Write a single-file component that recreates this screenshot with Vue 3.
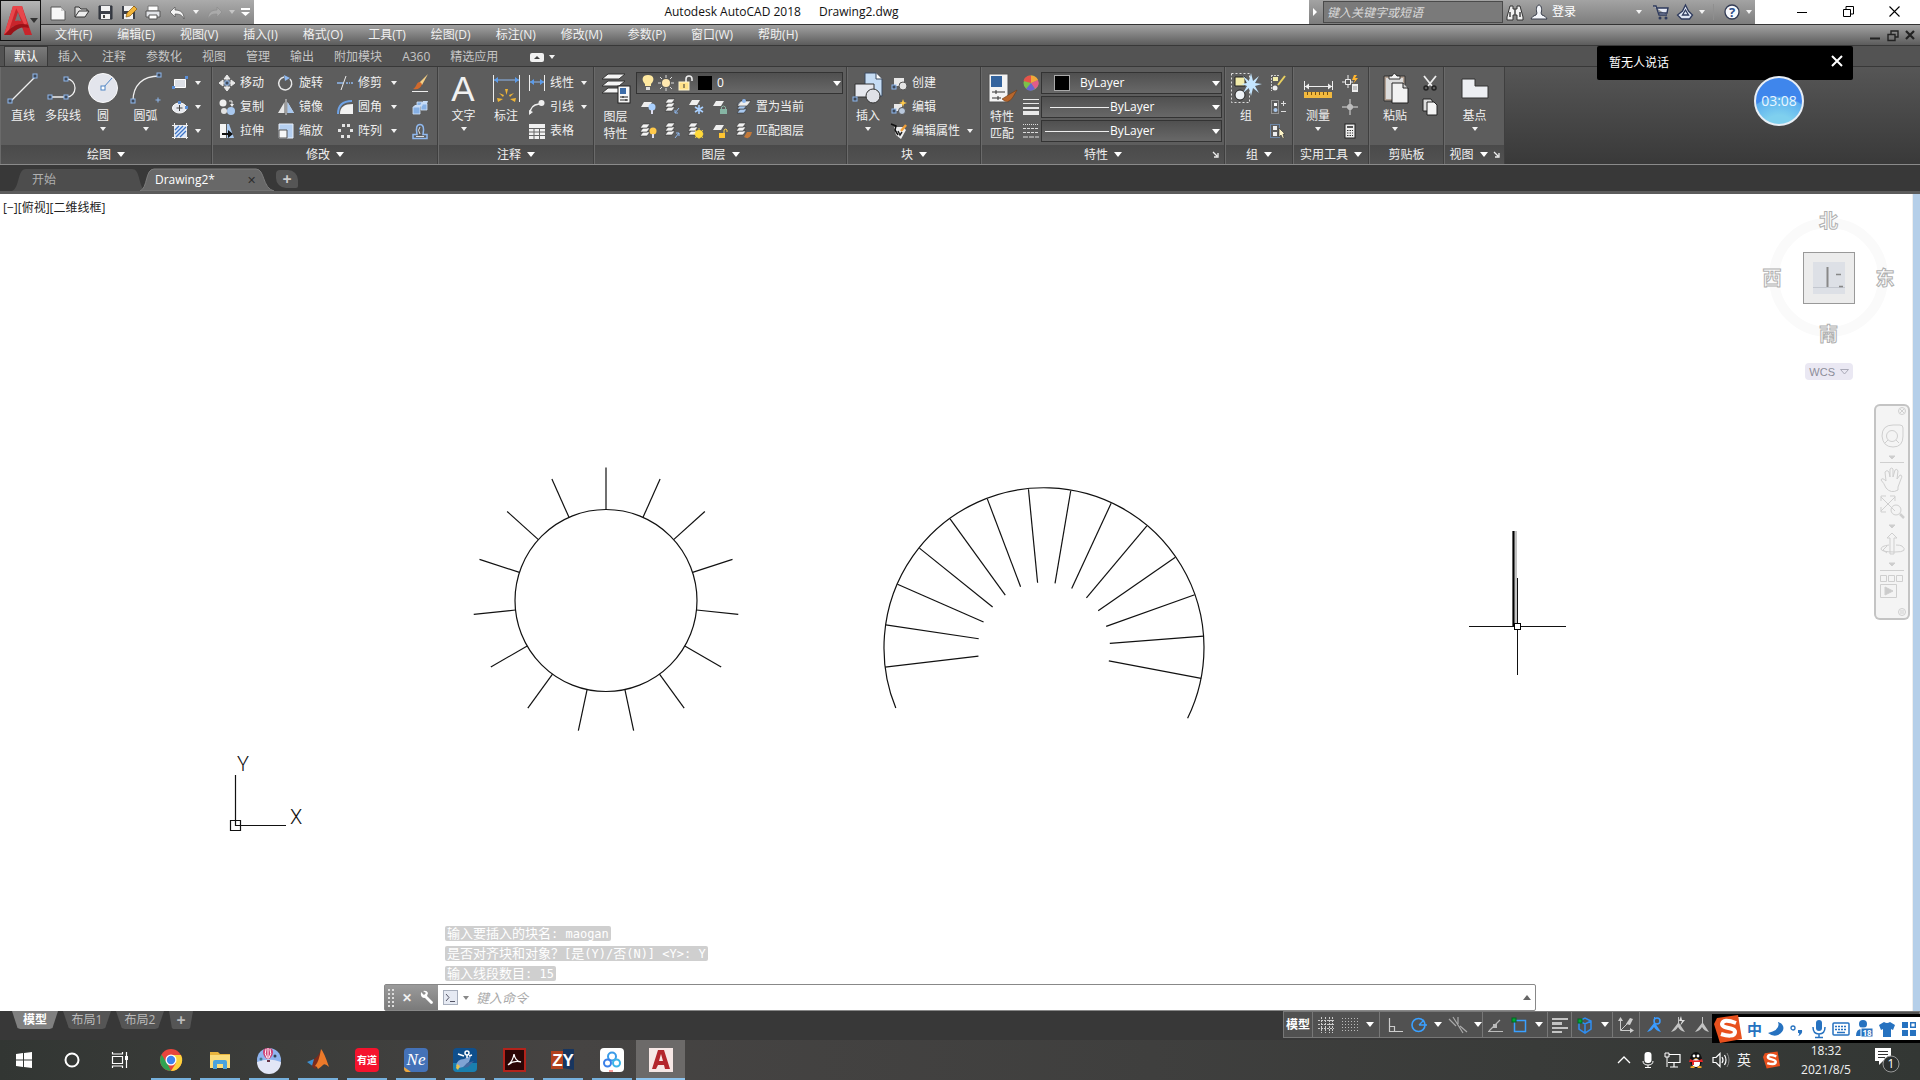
<script setup>
import { h, ref } from 'vue'

const B = '#8fb8ee'
const sq = (x, y) => `<rect x="${x}" y="${y}" width="4" height="4" fill="#3f4a5a" stroke="${B}"/>`
const sheets = (x, y, c = '#f4f4f4') => [8, 4, 0].map(d =>
  `<path d="M${x + 3} ${y + d}h7l-3 4h-7z" fill="${c}" stroke="#333" stroke-width=".6"/>`).join('')
const person = 'M8 1C5 1 5 7 6 9L5 11C2 12 1 13 0 15H16C15 13 14 12 11 11L10 9C11 7 11 1 8 1Z'
const compass = 'M9 1v6l-7 9q5-1 7-5q2 4 7 5l-6-9V1z'

// name: [width, height, markup]
const icons = {
  logo: [30, 32, '<path d="M10 1h9l10 29h-7l-3-8q-6-2-10 0l-2 8H1z" fill="#c9252c"/><path d="M10 1h4L6 25l-5 5zM19 1l5 17l-2 3L12 1z" fill="#e8474b"/><path d="M12 16l3-9l3 9q-3-1-6 0z" fill="#777"/><path d="M1 30l6-6q8-7 18-4l1 3q-10-3-18 7z" fill="#9c1218"/>'],
  new: [16, 15, '<path d="M1 2h10l4 4v9H1z" fill="#f7f7f7" stroke="#555"/><path d="M11 2v4h4z" fill="#ccc"/>'],
  open: [16, 14, '<path d="M1 12V2h4l2 2h6v3" fill="#ddd" stroke="#333"/><path d="M1 12l4-6h10l-4 6z" fill="#eee" stroke="#333"/>'],
  save: [15, 15, '<path d="M1 1h13v13H1z" fill="#3c4049" stroke="#2c3038"/><path d="M3 1h9v5H3zM3 9h9v5H3z" fill="#f2f2f2"/><path d="M5 10h2v3H5z" fill="#444"/>'],
  saveAs: [16, 15, '<path d="M1 1h13v13H1z" fill="#3c4049"/><path d="M3 1h9v5H3zM3 9h9v5H3z" fill="#f2f2f2"/><path d="M5 12l1-4 7-7 3 3-7 7z" fill="#f2b53a" stroke="#8a5b10" stroke-width=".7"/>'],
  print: [16, 15, '<path d="M3 1h10v5H3z" fill="#fff" stroke="#777"/><path d="M1 6h14v6H1z" fill="#e2e4e8" stroke="#555"/><path d="M4 10h8v4H4z" fill="#fff" stroke="#555"/>'],
  undo: [16, 13, '<path d="M6 1v3c6 0 9 3 9 9c-2-4-4-5-9-5v3L1 6z" fill="#f4f4f4" stroke="#555" stroke-width=".7"/>'],
  redo: [16, 13, '<path d="M10 1v3C4 4 1 7 1 13c2-4 4-5 9-5v3l5-5z" fill="#aaa" stroke="#8c8c8c" stroke-width=".7"/>'],
  more: [9, 9, '<path d="M0 0h9v2H0zM0 4h9L4.500 8z" fill="#fff"/>'],
  down: [6, 4, '<path d="M0 0h6L3 4z" fill="#f2f2f2"/>'],
  downL: [8, 5, '<path d="M0 0h8L4 5z" fill="#fff"/>'],
  downD: [8, 5, '<path d="M0 0h8L4 5z" fill="#333"/>'],
  expand: [6, 6, '<path d="M0 0l4 4M5 1v4H1" fill="none" stroke="#eee" stroke-width="1.300"/>'],
  right: [5, 8, '<path d="M0 0v8l4-4z" fill="#fff"/>'],
  binoc: [16, 17, '<path d="M3 2h3v3h4V2h3l3 11v3h-6v-5H6v5H0v-3z" fill="#f1f1f1" stroke="#333"/><path d="M8 5v6M3 8v5M13 8v5" stroke="#444" stroke-width="1.500"/>'],
  user: [16, 16, `<path d="${person}" fill="#f4f6fa" stroke="#3a3f4c"/>`],
  cart: [16, 16, '<path d="M0 2h3l3 9h8M4 4h11l-1 5H6" fill="#e7ebf5" stroke="#2e3a5c" stroke-width="1.400"/><circle cx="7" cy="14" r="1.500" fill="#2e3a5c"/><circle cx="13" cy="14" r="1.500" fill="#2e3a5c"/>'],
  a360: [17, 16, '<path d="M8.500 1l3 6 4 4-3 4h-8l-4-4 5-4z" fill="#dfe6f4" stroke="#2e3a5c" stroke-width="1.300"/><path d="M8.500 6l3 5h-6z" fill="none" stroke="#2e3a5c" stroke-width="1.300"/>'],
  help: [16, 16, '<circle cx="8" cy="8" r="7" fill="#f7f9fd" stroke="#333c55" stroke-width="1.300"/><text x="8" y="13" font-size="13" font-weight="700" text-anchor="middle" fill="#2e4f8c">?</text>'],
  wMin: [11, 11, '<path d="M0 6.500h10" stroke="#000"/>'],
  wMax: [11, 11, '<path d="M.5 3.500h7v7h-7zM3 3V.5h7.500V8H8" fill="none" stroke="#000"/>'],
  wClose: [11, 11, '<path d="M.5 .5l10 10M10.500 .5l-10 10" stroke="#000" stroke-width="1.100"/>'],
  dMin: [11, 11, '<path d="M0 8.500h10" stroke="#222" stroke-width="2"/>'],
  dMax: [12, 11, '<path d="M1 4.500h7v6H1zM4 4V1h7v6H8" fill="none" stroke="#222" stroke-width="1.400"/>'],
  dClose: [10, 10, '<path d="M1 1l8 8M9 1L1 9" stroke="#222" stroke-width="2.200"/>'],
  ribbonMin: [14, 9, '<rect width="14" height="9" rx="2" fill="#f1f1f1"/><path d="M4 6h6L7 3z" fill="#444"/>'],

  line: [32, 32, `<path d="M4 29L29 4" stroke="#f0f0f0" stroke-width="1.300"/>${sq(1, 27)}${sq(26, 2)}`],
  pline: [32, 32, `<path d="M3 25h17a8 9 0 0 0 0-18h-1" fill="none" stroke="#f0f0f0" stroke-width="1.300"/>${sq(1, 23)}${sq(17, 23)}${sq(17, 5)}`],
  circle: [32, 32, `<circle cx="16" cy="16" r="14.500" fill="#e3e5ec" stroke="#fafafa"/><path d="M16 16l9-10" stroke="#4d83c4"/><rect x="14" y="14" width="4" height="4" fill="#fff" stroke="#4d83c4"/>`],
  arc: [32, 32, `<path d="M3 29C3 13 13 4 29 4" fill="none" stroke="#f0f0f0" stroke-width="1.300"/>${sq(1, 27)}${sq(27, 1)}<path d="M25.500 28h5M28 25.500v5" stroke="${B}"/>`],
  rect: [16, 16, `<path d="M2.500 4.500h11v8h-11z" fill="#dcdfe6" stroke="#fff"/><path d="M0 11h3v3H0zM13 1h3v3h-3z" fill="#5a8ed6"/>`],
  ellipse: [16, 16, `<ellipse cx="7.500" cy="9" rx="7" ry="5" fill="#e6e8ee" stroke="#fff"/><path d="M7.500 6v6M4.500 9h6" stroke="#444"/><path d="M6 2h3v3H6zM13 7h3v3h-3z" fill="#5a8ed6"/>`],
  hatch: [16, 16, '<path d="M2.500 0v16M14.500 0v16M0 2.500h16M0 14.500h16" stroke="#eee"/><rect x="3" y="3" width="11" height="11" fill="#dfe9fa"/><path d="M3 7l4-4M3 11l8-8M4 14l10-10M8 14l6-6" stroke="#3f76c6" stroke-width="1.300"/>'],
  move: [16, 16, `<path d="M8 0l3 4H5zM8 16l3-4H5zM0 8l4-3v6zM16 8l-4-3v6zM8 3v3M8 10v3M3 8h3M10 8h3" fill="#e9e9e9" stroke="#e9e9e9" stroke-width="1"/>${sq(6, 6)}`],
  rotate: [16, 16, `<path d="M6 2A6.500 6.500 0 1 0 12 4" fill="none" stroke="#e9e9e9" stroke-width="1.500"/><path d="M6 0l6 3-5 3z" fill="${B}"/>`],
  trim: [16, 16, `<path d="M0 8h6M9 8h2M12 8h1M14 8h2" stroke="${B}" stroke-width="1.300"/><path d="M9 1L4 15" stroke="#eee"/>`],
  brush: [16, 18, '<path d="M0 17.500h16" stroke="#eee"/><path d="M16 0L7 9l3 2z" fill="#f5cf85"/><path d="M8 8c-4 0-3 5-7 7c5 1 8-1 9-5z" fill="#d0692c"/>'],
  copy: [16, 16, '<circle cx="4" cy="4" r="3.500" fill="#f0f0f0"/><circle cx="5" cy="12" r="3" fill="#e2e2e2"/><circle cx="12" cy="12" r="4" fill="#a9c8ee"/><path d="M10 2h3v4" fill="none" stroke="#eee"/><path d="M11 5h4l-2 3z" fill="#eee"/>'],
  mirror: [16, 16, '<path d="M6.500 3v11H0zM9.500 3v11H16z" fill="#e8e8e8"/><path d="M9.500 3v11H16z" fill="#a9c8ee"/><path d="M8 0v16" stroke="#ddd"/>'],
  fillet: [16, 16, '<path d="M3 15c0-7 4-10 13-10v10z" fill="#f2f2f2"/><path d="M1 15C1 6 6 2 15 2" fill="none" stroke="#6fa3e6" stroke-width="2"/>'],
  explode: [16, 16, '<path d="M1 8h7v7H1zM9 5h6v6H9zM5 3h5v4H5z" fill="#86b0e4" stroke="#d6e6fa" stroke-width=".8"/><path d="M1 8l2-2h7l-2 2zM9 5l2-3h5l-1 3z" fill="#c7dcf6"/>'],
  stretch: [16, 16, '<path d="M1 1h6v14H1z" fill="#f4f4f4"/><path d="M8 1h2l5 14H8z" fill="#a9c8ee"/><path d="M3 11h7" stroke="#111" stroke-width="2"/><path d="M9 7l5 4-5 4z" fill="#111"/>'],
  scale: [16, 16, '<path d="M1 1h14v14H1z" fill="#b5cff0" stroke="#e8f0fb"/><path d="M1 7h8v8H1z" fill="#f7f7f7" stroke="#555"/>'],
  array: [16, 16, '<path d="M5 1h3v3H5zM10 1h3v3h-3zM1 6h3v3H1zM13 6h3v3h-3zM4 12h3v3H4zM10 12h3v3h-3z" fill="#e4e4e4"/>'],
  offset: [16, 16, `<path d="M1 15.500h14v-4h-4q2-10-3-10t-3 10H1z" fill="none" stroke="${B}" stroke-width="1.500"/><path d="M4 13.500h8M8 4q-3 3 0 7" fill="none" stroke="#ddd"/>`],
  text: [32, 32, '<text x="15" y="29" font-size="35" text-anchor="middle" font-family="Liberation Sans" fill="#f1f1f1">A</text>'],
  dim: [32, 32, `<path d="M3.500 3v27M29.500 3v27" stroke="#eee"/><path d="M4 8h25" stroke="${B}"/><path d="M4 8l4-3v6zM29 8l-4-3v6z" fill="#5b9bea"/><path d="M15 17l3 0-1.500 6zM9 21l5 2-1 2zM24 21l-5 2 1 2zM7 26l6 1-5 3zM26 26l-6 1 5 3z" fill="#f0b636"/>`],
  linear: [16, 16, `<path d="M.5 0v16M15.500 0v16" stroke="#eee"/><path d="M1 7h14" stroke="${B}"/><path d="M1 7l4-3v6zM15 7l-4-3v6z" fill="#5b9bea"/>`],
  leader: [16, 16, '<path d="M1 15Q1 6 10 5" fill="none" stroke="#eee" stroke-width="1.300"/><path d="M0 16l0-5 4 2z" fill="#eee"/><circle cx="12.500" cy="4" r="3" fill="#eee"/>'],
  table: [16, 16, '<path d="M0 1h16v15H0z" fill="#f0f0f0"/><path d="M0 5.500h16M0 9h16M0 12.500h16M5 5v11M10.500 5v11" stroke="#666"/>'],
  layers: [32, 32, '<path d="M8 2h17l-6 5H2zM8 9h17l-6 5H2zM8 16h11v5H2z" fill="#f5f5f5" stroke="#333"/><rect x="18" y="14" width="12" height="17" fill="#f7f7f7" stroke="#222"/><rect x="20" y="16" width="6" height="6" fill="#3c6ca8"/><path d="M20 25h8M20 28h8M23 24v2M26 27v2" stroke="#222"/>'],
  bulb: [12, 16, '<path d="M6 0C0 0-1 5 3 9v2h6V9c4-4 3-9-3-9z" fill="#ffe9a0"/><path d="M4 12h4v3H4z" fill="#ddd"/>'],
  sun: [16, 16, '<circle cx="8" cy="8" r="4" fill="#ffe8b0"/><path d="M8 0v3M8 13v3M0 8h3M13 8h3M2 2l2 2M12 12l2 2M14 2l-2 2M4 12l-2 2" stroke="#ddd"/>'],
  lock: [16, 16, '<path d="M8 8V4q0-3 3-3t3 3v2" fill="none" stroke="#eee" stroke-width="1.600"/><rect x="1" y="7" width="10" height="8" fill="#ffe28a" stroke="#fff6d0"/><path d="M6 9v4" stroke="#333"/>'],
  lyOff: [16, 16, '<path d="M4 3h8l-3 5H1z" fill="#eee"/><circle cx="12" cy="8" r="3.500" fill="#a9d0ff"/><path d="M11 11h2v4h-2z" fill="#dde"/>'],
  lyIso: [16, 16, `${sheets(1, 0)}<path d="M15 9l-4 5M11 11v3h3" stroke="${B}" fill="none"/>`],
  lyFrz: [16, 16, '<path d="M4 1h8l-3 5H1z" fill="#eee"/><path d="M11 6v9M7 8l8 5M15 8l-8 5" stroke="#a9d0ff" stroke-width="1.600"/>'],
  lyLock: [16, 16, '<path d="M4 2h8l-3 5H1z" fill="#eee"/><path d="M9.500 10V8q2-2 4 0v2" fill="none" stroke="#8ab0a0"/><path d="M8 10h7v5H8z" fill="#86b5a4"/>'],
  lyCur: [16, 16, `${sheets(1, 2, '#a9c8ee')}<path d="M5 2h10l-4 5H1z" fill="#eee" stroke="#333" stroke-width=".6"/><circle cx="8" cy="2" r="2" fill="${B}"/>`],
  lyOn: [16, 16, `${sheets(0, 1)}<circle cx="13" cy="8" r="3.500" fill="#ffc94a"/><path d="M12 11h2v4h-2z" fill="#dde"/>`],
  lyUniso: [16, 16, `${sheets(1, 0)}<path d="M11 15l4-5M15 13v-3h-3" stroke="${B}" fill="none"/>`],
  lyThaw: [16, 16, `${sheets(0, 0)}<circle cx="11" cy="11" r="4" fill="#ffd93a"/><path d="M11 5v11M5.500 11h10M7 7l8 8M15 7l-8 8" stroke="#ffd93a" stroke-width=".8"/>`],
  lyUnlock: [16, 16, '<path d="M4 2h8l-3 5H1z" fill="#eee"/><path d="M12 10V7q2-2 3 0v2" fill="none" stroke="#ffd24a"/><path d="M7 10h6v5H7z" fill="#ffc531"/>'],
  lyMatch: [16, 16, `${sheets(0, 0)}<path d="M16 9l-5 0-3 5q5 3 7-2z" fill="#c47a3a"/>`],
  insert: [32, 32, `<path d="M13 1h11l6 6v17H13z" fill="#c6ddf5" stroke="#3a4a60"/><path d="M24 1v6h6" fill="#fff" stroke="#3a4a60"/><path d="M3 12h19v13H3z" fill="#e6e8ee" stroke="#333"/><circle cx="21" cy="24" r="7" fill="#dfe1e7" stroke="#333"/>${sq(1, 25)}`],
  create: [16, 16, `<path d="M3 3h10v8H3z" fill="#e8e8e8"/><circle cx="12" cy="11" r="4" fill="#e4e4e4" stroke="#555"/>${sq(1, 10)}`],
  edit: [16, 16, `<path d="M3 5h8v7H3z" fill="#e8e8e8"/><circle cx="11" cy="12" r="3.500" fill="#b9c8dc" stroke="#555"/>${sq(1, 10)}<path d="M12 0l1 3 3 1-3 1-1 3-1-3-3-1 3-1z" fill="#ffc94a"/>`],
  editAttr: [16, 16, '<path d="M3 4h9l3 3-5 9-5-4z" fill="#f0f0f0"/><path d="M0 1l5 2-1 4 3 5" fill="none" stroke="#111" stroke-width="1.500"/><path d="M7 8l2 4 2-3" fill="none" stroke="#222" stroke-width="1.500"/><path d="M10 8l5-6" stroke="#f0a03a" stroke-width="2.500"/>'],
  match: [32, 32, '<rect x="3" y="2" width="19" height="28" fill="#f4f4f4" stroke="#555"/><path d="M5 4h11v11H5z" fill="#34649e"/><path d="M6 20h13M6 26h9M10 18v4M12 24v4" stroke="#333"/><path d="M31 18l-7 4-8 5q6 6 11-2z" fill="#b8662c" stroke="#6d3a14" stroke-width=".6"/>'],
  wheel: [16, 16, '<circle cx="8" cy="8" r="7.500" fill="#7cc04a"/><path d="M8 8V.5A7.500 7.500 0 0 1 15 5z" fill="#f2a63a"/><path d="M8 8l7-3a7.500 7.500 0 0 1-3 9z" fill="#e25b8a"/><path d="M8 8l4 6a7.500 7.500 0 0 1-9 0z" fill="#6a63d2"/><path d="M8 8L.5 6A7.500 7.500 0 0 1 8 .5z" fill="#e6534a"/>'],
  weight: [16, 16, '<path d="M0 .5h16M0 4.500h16" stroke="#e8e8e8"/><path d="M0 9h16" stroke="#e8e8e8" stroke-width="2"/><path d="M0 14h16" stroke="#e8e8e8" stroke-width="4"/>'],
  ltype: [16, 16, '<path d="M0 1.500h16" stroke="#ddd" stroke-dasharray="1 1"/><path d="M0 5.500h16M0 9.500h16" stroke="#ddd" stroke-dasharray="3 1"/><path d="M0 14h16" stroke="#ddd" stroke-dasharray="5 1"/>'],
  group: [32, 32, '<rect x="1.500" y="1.500" width="18" height="29" fill="none" stroke="#ddd" stroke-dasharray="2 2"/><path d="M5 5h10v9H5z" fill="#f2ecaa" stroke="#222"/><circle cx="10" cy="23" r="5" fill="#eef2f6" stroke="#222"/><path d="M21 1l2 8 6-5-4 7 7 1-7 2 4 7-6-5-2 8-2-8-6 5 4-7-6-2 6-1-4-7 6 5z" fill="#c5e6ff"/>'],
  ungroup: [16, 16, '<path d="M1.500 0v16M1 .5h8" stroke="#ccc" stroke-dasharray="2 1"/><path d="M3 2h5v4H3z" fill="#f2ecaa"/><circle cx="5" cy="13" r="2.500" fill="#eee"/><path d="M15 1l-7 9" stroke="#e8d060" stroke-width="2"/>'],
  groupEdit: [16, 16, '<path d="M1.500 1.500h7v13h-7z" fill="none" stroke="#ccc" stroke-dasharray="1 1"/><path d="M4 4h3v3H4z" fill="#fff"/><circle cx="5.500" cy="11" r="2" fill="#a9c8ee"/><path d="M11 4.500h5M13.500 2v5M11 12.500h5" stroke="#ddd"/>'],
  groupSel: [16, 16, '<path d="M.5 1.500h9v13h-9z" fill="none" stroke="#7fb0f0" stroke-dasharray="1 1"/><path d="M3 3h4v4H3zM3 9h4v4H3z" fill="#eee"/><path d="M9 5v9l2-2 2 4 1-1-1-4h2z" fill="#fff5c8" stroke="#333" stroke-width=".6"/>'],
  measure: [32, 32, '<path d="M2.500 9v9M30.500 9v9M3 14.500h27" stroke="#eee"/><path d="M3 14.500l4-3v6zM30 14.500l-4-3v6z" fill="#eee"/><path d="M2 20h28v6H2z" fill="#f2b93e"/><path d="M5.500 20v3M9.500 20v3M13.500 20v3M17.500 20v3M21.500 20v3M25.500 20v3" stroke="#7a5210"/>'],
  quick: [16, 17, '<path d="M0 7h4M8 7h3M6 0v5M6 9v4M3.500 4.500h5v5h-5z" fill="none" stroke="#eee"/><path d="M12 0l-2 5h3l-2 4 5-6h-3l2-3z" fill="#ffb52e"/><path d="M10 9h6v8h-6z" fill="#eee"/><path d="M11.500 12h4M11.500 14h4" stroke="#444" stroke-dasharray="1 1"/>'],
  point: [16, 16, '<path d="M0 8h16M8 0v16M6 6h4v4H6z" fill="none" stroke="#ddd"/>'],
  calc: [16, 16, '<rect x="3" y="1" width="10" height="14" fill="#eee" stroke="#222"/><path d="M5 3h6v2H5z" fill="#555"/><path d="M5 7.500h6M5 10h6M5 12.500h6" stroke="#333" stroke-dasharray="1.500 1"/>'],
  paste: [32, 32, '<path d="M5 4h21v25H5z" fill="#b3a193" stroke="#333"/><path d="M7 6h17v21H7z" fill="#dcdcdc"/><path d="M10 4h3q2-5 5 0h3v3H10z" fill="#f4f4f4" stroke="#333"/><path d="M13 11h11l5 5v15H13z" fill="#f2f2f2" stroke="#222"/><path d="M24 11v5h5" fill="#ccc" stroke="#222"/>'],
  cut: [16, 16, '<path d="M2 1l8 10M14 1L6 11" stroke="#eee" stroke-width="1.800"/><circle cx="4" cy="13" r="2" fill="none" stroke="#222" stroke-width="1.500"/><circle cx="12" cy="13" r="2" fill="none" stroke="#222" stroke-width="1.500"/>'],
  copyClip: [16, 16, '<path d="M1 0h8l2 3v9H1z" fill="#ddd" stroke="#222"/><path d="M5 3h7l3 3v10H5z" fill="#f4f4f4" stroke="#222"/>'],
  base: [32, 32, '<path d="M3 7h13v7h13v12H3z" fill="#eceef2" stroke="#333"/>'],

  grid: [16, 16, '<path d="M3.500 0v16M7.500 0v16M11.500 0v16M14.500 0v16M0 3.500h16M0 7.500h16M0 11.500h16" stroke="#ccc" stroke-dasharray="2 1"/>'],
  snap: [16, 16, '<path d="M0 1.500h16M0 4.500h16M0 7.500h16M0 10.500h16M0 13.500h16" stroke="#bbb" stroke-dasharray="1 2"/>'],
  ortho: [16, 16, '<path d="M1.500 1v13.500H15M1.500 9.500h5v5" fill="none" stroke="#ccc" stroke-width="1.200"/>'],
  polar: [16, 16, '<circle cx="7.500" cy="8" r="6.500" fill="none" stroke="#3aa0ff" stroke-width="1.600"/><path d="M8 8h8M8 8l5-5" stroke="#3aa0ff" stroke-width="1.400"/>'],
  iso: [18, 16, '<path d="M4 0l10 16M9 0v7M0 2l7 7M11 9l7 6" stroke="#aaa" stroke-width="1.200"/>'],
  track: [16, 16, '<path d="M1 14.500h15M2 14L13 3" stroke="#bbb" stroke-width="1.200"/><path d="M6 7h4v4H6z" fill="#bbb"/>'],
  osnap: [16, 16, '<path d="M3.500 3.500h11v11h-11z" fill="none" stroke="#3aa0ff" stroke-width="1.500"/><rect x="1" y="1" width="4" height="4" fill="#0a3" stroke="#062"/>'],
  lwt: [16, 16, '<path d="M0 1h16v2H0zM0 5h10v3H0zM0 10h16v2H0zM0 14h10v2H0z" fill="#c4c4c4"/>'],
  osnap3: [16, 16, '<path d="M2 4l6-3 6 3v8l-6 4-6-4zM2 4l6 3 6-3M8 7v9" fill="none" stroke="#2f8df0" stroke-width="1.500"/><rect x="1" y="2" width="4" height="4" fill="#0a3" stroke="#062"/>'],
  ucs: [16, 16, '<path d="M2.500 2v11.500H15M3 13L11 5" fill="none" stroke="#ccc"/><path d="M0 4l2.500-4L5 4zM12 11l4 2.500-4 2.500z" fill="#ccc"/><path d="M8 7l4-6 3 1-3 6z" fill="#ccc"/>'],
  annoVis: [18, 17, `<path d="${compass}" fill="#3a9bff"/><circle cx="12" cy="5" r="3" fill="none" stroke="#3a9bff" stroke-width="1.500"/>`],
  annoAuto: [18, 17, `<path d="${compass}" fill="#c2c2c2"/><path d="M12 0l-2 5h3l-2 5 5-6h-3z" fill="#ddd"/>`],
  anno: [18, 17, `<path d="${compass}" fill="#c2c2c2"/>`],

  sogou: [28, 28, '<path d="M3 3L24 0l4 24L6 28 0 9z" fill="#e8501d"/><path d="M22 8Q9 3 8 9c0 5 13 3 13 8s-8 4-14 2" fill="none" stroke="#fff" stroke-width="4"/>'],
  moon: [16, 16, '<path d="M10 1q3 8-10 11q5 4 10 2q7-4 5-9q-1-3-5-4z" fill="#2672c0"/>'],
  punct: [16, 16, '<circle cx="4" cy="7" r="2" fill="none" stroke="#2672c0" stroke-width="1.300"/><path d="M9 9h4q1 4-4 6q2-2 1-3H9z" fill="#2672c0"/>'],
  mic: [16, 18, '<rect x="5" y="0" width="6" height="11" rx="3" fill="#2672c0"/><path d="M2 7q0 7 6 7t6-7M8 14v3M4 17.500h8" fill="none" stroke="#2672c0" stroke-width="1.500"/>'],
  keyb: [18, 14, '<rect x="1" y="1" width="16" height="12" rx="1" fill="none" stroke="#2672c0" stroke-width="1.500"/><path d="M3 4.500h12M3 7.500h12" stroke="#2672c0" stroke-width="1.500" stroke-dasharray="2 1"/><path d="M5 10.500h8" stroke="#2672c0" stroke-width="1.500"/>'],
  imeUser: [18, 18, '<circle cx="7" cy="4" r="4" fill="#2672c0"/><path d="M0 16q0-8 7-7q8-1 7 7z" fill="#2672c0"/><rect x="5" y="8" width="12" height="9" fill="#2672c0" stroke="#fff"/><text x="11" y="16" font-size="8" font-weight="700" text-anchor="middle" fill="#fff">18</text>'],
  shirt: [16, 16, '<path d="M5 1q3 2 6 0l5 3-2 5-2-1v8H4V8L2 9 0 4z" fill="#2672c0"/>'],
  tools: [16, 16, '<path d="M1 1h6v6H1zM1 9h6v6H1zM9 9h6v6H9z" fill="#2672c0"/><path d="M9.700 1.700h4.600v4.600H9.700z" fill="none" stroke="#2672c0" stroke-width="1.400"/>'],

  win: [24, 24, '<path d="M4 6l7-1v6.500H4zM12 5l8-1v7.500h-8zM4 12.500h7V19l-7-1zM12 12.500h8V20l-8-1z" fill="#fff"/>'],
  cortana: [24, 24, '<circle cx="12" cy="12" r="6.500" fill="none" stroke="#fff" stroke-width="2"/>'],
  taskview: [24, 24, '<path d="M4.500 8.500h10v7h-10zM4.500 4v2h10V4M4.500 20v-2h10v2M18.500 4v16" fill="none" stroke="#fff" stroke-width="1.200"/><path d="M17 8h3v4h-3z" fill="#fff"/>'],
  chrome: [24, 24, '<circle cx="12" cy="12" r="11" fill="#e8453c"/><path d="M2.500 6.500L9 17l3 6A11 11 0 0 1 2.500 6.500z" fill="#2fa352"/><path d="M12 7h10A11 11 0 0 1 12 23l5-8z" fill="#fdd23c"/><circle cx="12" cy="12" r="5.500" fill="#fff"/><circle cx="12" cy="12" r="4.200" fill="#3f83ee"/>'],
  folder: [24, 24, '<path d="M2 4h8l2 2h10v4H2z" fill="#e9b53d"/><path d="M2 7h20v13H2z" fill="#fbdd7c"/><path d="M5 21v-7q0-2 2-2h10q2 0 2 2v7h-4v-5H9v5z" fill="#4aa3df"/>'],
  balloon: [24, 24, '<circle cx="12" cy="12" r="12" fill="#8fb4ee"/><path d="M0 14q12-5 24 0a12 12 0 0 1-24 0z" fill="#e2e6f6"/><path d="M11 0q-5 0-5 4t4 7h2q4-3 4-7t-5-4z" fill="#cf3f74"/><path d="M11 0v11M9 1q-2 5 1 9M13 1q2 5-1 9" stroke="#fff" fill="none"/><path d="M10 12h3v2h-3z" fill="#634"/><circle cx="18" cy="8" r="1.500" fill="#345"/><circle cx="4" cy="11" r="1.500" fill="#478"/>'],
  matlab: [24, 24, '<path d="M1 14l7-3 5 5-5 3z" fill="#3d8fd0"/><path d="M8 11q4-2 7-9l-2 14-4 5-3-3z" fill="#7c2b1c"/><path d="M15 1q3 3 8 18-4-4-6-2t-5 4q-1-3-3-3 4-4 6-17z" fill="#ec7a2a"/>'],
  youdao: [24, 24, '<rect width="24" height="24" rx="4" fill="#f5132d"/><text x="12" y="16" font-size="10" font-weight="700" text-anchor="middle" fill="#fff">有道</text>'],
  ne: [24, 24, '<rect width="24" height="24" rx="4" fill="#4472b8"/><path d="M0 19l7 5H3q-3 0-3-4z" fill="#f0a83a"/><text x="12" y="17" font-size="17" font-style="italic" text-anchor="middle" font-family="Liberation Serif" fill="#fff">Ne</text>'],
  plane: [24, 24, '<rect width="24" height="24" rx="4" fill="#0f4f8c"/><path d="M0 15h24v5q0 4-4 4H4q-4 0-4-4z" fill="#1a7fae"/><path d="M3 18q1-7 8-7l7-3-2 6-6 5-4 1z" fill="#7fa3d4"/><path d="M10 20l4-5 7-2-6 6z" fill="#43689f"/><path d="M4 16l3 2-2 4-2-2z" fill="#e9c24a"/><circle cx="14" cy="5" r="2" fill="none" stroke="#fff" stroke-width="1.500"/><path d="M14 7v3M5 6l6 2M16 8l3-1" stroke="#fff" stroke-width="1.500"/>'],
  pdf: [24, 24, '<rect x="2" y="1" width="21" height="22" fill="#2a0606" stroke="#b3231b" stroke-width="2"/><path d="M12 6q-1 7-6 11q6-5 13-3q-6-1-7-8z" fill="none" stroke="#fff" stroke-width="1.300"/>'],
  zy: [24, 24, '<path d="M0 3h12v18H0z" fill="#b3421f"/><path d="M12 1h11v21l-11-2z" fill="#17355f"/><text x="12" y="18" font-size="17" font-weight="700" text-anchor="middle" font-family="Liberation Sans" fill="#fff">ZY</text>'],
  baidu: [24, 24, '<rect width="24" height="24" rx="4" fill="#fff"/><circle cx="12" cy="8.500" r="4" fill="none" stroke="#3a9be8" stroke-width="2"/><circle cx="7.500" cy="15" r="3.500" fill="none" stroke="#3a7fe8" stroke-width="2"/><circle cx="16.500" cy="15" r="3.500" fill="none" stroke="#3ab4e8" stroke-width="2"/><path d="M9 23h4" stroke="#e33"/>'],
  acad: [24, 24, '<rect width="24" height="24" fill="#f6e7e5"/><path d="M9 2h6l6 19h-5l-1-4H9l-2 4H3z" fill="#b3262c"/><path d="M10 13l2-7 2 7z" fill="#f6e7e5"/>'],
  up: [14, 8, '<path d="M1 7l6-6 6 6" fill="none" stroke="#fff" stroke-width="1.300"/>'],
  trayMic: [12, 16, '<rect x="2.500" y="0" width="7" height="11" rx="3" fill="#fff"/><path d="M1 9q0 4 5 4t5-4M6 13v3M3 15.500h6" fill="none" stroke="#fff"/>'],
  net: [17, 16, '<path d="M4 2.500h12v8H4M10 11v4M6 15h8" fill="none" stroke="#fff" stroke-width="1.200"/><path d="M1 1h4v4H1zM3 5v10" stroke="#fff" fill="#444"/>'],
  qq: [16, 16, '<ellipse cx="8" cy="8" rx="6" ry="8" fill="#111"/><ellipse cx="8" cy="11" rx="4" ry="4" fill="#fff"/><path d="M2 7q6 3 12 0l1 3H6v3H4v-3H1z" fill="#e52525"/><circle cx="6" cy="4" r="1.400" fill="#fff"/><circle cx="10" cy="4" r="1.400" fill="#fff"/><path d="M6 6h4l-2 1zM2 15q3-2 5 0l-1 1H3zM9 15q3-2 5 0l-1 1h-3z" fill="#f5a623"/>'],
  speaker: [17, 16, '<path d="M1 5.500h3l4-4v13l-4-4H1zM10 5q2 3 0 6M12.500 3q3 5 0 10" fill="none" stroke="#fff" stroke-width="1.200"/><path d="M15 1q4 7 0 14" fill="none" stroke="#888"/>'],
  note: [26, 28, '<path d="M1 2h16v13H9l-4 4v-4H1z" fill="#fff"/><path d="M4 5.500h10M4 8.500h10M4 11.500h7" stroke="#333"/><circle cx="17" cy="18" r="8" fill="#2c302f" stroke="#999"/><text x="17" y="22" font-size="12" text-anchor="middle" fill="#fff">1</text>'],
  wrench: [14, 15, '<path d="M1 2l3 3 2-2-3-2q4-1 5 2l-1 3 6 6q0 2-2 2L5 8Q0 8 1 2z" fill="#fff"/>'],
  prompt: [15, 15, '<rect x=".5" y=".5" width="14" height="14" fill="#e6eaf3" stroke="#a8afbd"/><path d="M3 4l3 3.500L3 11M7 11.500h5" fill="none" stroke="#556"/>'],
  upG: [8, 5, '<path d="M0 5h8L4 0z" fill="#666"/>'],
  downG: [6, 4, '<path d="M0 0h6L3 4z" fill="#888"/>'],
  grip: [6, 18, '<path d="M1 0v18M5 0v18" stroke="#ddd" stroke-width="2" stroke-dasharray="2 2"/>']
}

const Icon = (props) => {
  const [w, ht, markup] = icons[props.name]
  return h('svg', { class: 'ico', width: w, height: ht, viewBox: `0 0 ${w} ${ht}`, innerHTML: markup, 'aria-hidden': 'true' })
}
Icon.props = ['name']

const menus = ['文件(F)', '编辑(E)', '视图(V)', '插入(I)', '格式(O)', '工具(T)', '绘图(D)', '标注(N)', '修改(M)', '参数(P)', '窗口(W)', '帮助(H)']
const tabs = ['默认', '插入', '注释', '参数化', '视图', '管理', '输出', '附加模块', 'A360', '精选应用']
const activeTab = ref('默认')

const modify = [
  ['move', '移动'], ['rotate', '旋转'], ['trim', '修剪', true], ['brush', ''],
  ['copy', '复制'], ['mirror', '镜像'], ['fillet', '圆角', true], ['explode', ''],
  ['stretch', '拉伸'], ['scale', '缩放'], ['array', '阵列', true], ['offset', '']
]
const layerTools = [
  ['lyOff', 'lyIso', 'lyFrz', 'lyLock', 'lyCur'],
  ['lyOn', 'lyUniso', 'lyThaw', 'lyUnlock', 'lyMatch']
]
const history = [
  [['输入要插入的块名', 0], [': maogan', 1]],
  [['是否对齐块和对象？', 0], ['[', 1], ['是', 0], ['(Y)/', 1], ['否', 0], ['(N)] <Y>: Y', 1]],
  [['输入线段数目', 0], [': 15', 1]]
]
const statusGroups = [
  ['grid', 'snap', 'v'], ['ortho', 'polar', 'v', 'iso', 'v'], ['track', 'osnap', 'v'],
  ['lwt'], ['osnap3', 'v'], ['ucs'], ['annoVis', 'annoAuto', 'anno']
]
const ime = ['moon', 'punct', 'mic', 'keyb', 'imeUser', 'shirt', 'tools']
const apps = ['chrome', 'folder', 'balloon', 'matlab', 'youdao', 'ne', 'plane', 'pdf', 'zy', 'baidu', 'acad']

const layer = ref('0')
const command = ref('')
const keyword = ref('')
const toastOpen = ref(true)

// radial line between two radii, angle in degrees clockwise from east
function spoke(cx, cy, r1, r2, deg) {
  const a = deg * Math.PI / 180
  return {
    x1: cx + r1 * Math.cos(a), y1: cy + r1 * Math.sin(a),
    x2: cx + r2 * Math.cos(a), y2: cy + r2 * Math.sin(a)
  }
}
const sunRays = Array.from({ length: 15 }, (_, i) => spoke(606, 406.5, 91, 133, i * 24 - 90))
const arcRays = Array.from({ length: 14 }, (_, i) => spoke(1044, 454.5, 66, 160, 158.1 + (i + 1) * 15.19))
</script>

<template>
  <div class="cad">
    <header class="titlebar">
      <button class="app-btn" aria-label="应用程序菜单"><Icon name="logo" /><Icon name="downD" /></button>
      <div class="qat">
        <button v-for="n in ['new', 'open', 'save', 'saveAs', 'print', 'undo']" :key="n" :aria-label="n"><Icon :name="n" /></button>
        <Icon name="down" />
        <button class="redo" aria-label="redo"><Icon name="redo" /></button>
        <Icon name="down" class="dim" />
        <Icon name="more" />
      </div>
      <h1 class="title"><span>Autodesk AutoCAD 2018</span><span>Drawing2.dwg</span></h1>
      <div class="info">
        <span class="handle"><Icon name="right" /></span>
        <input v-model="keyword" class="search" type="text" placeholder="键入关键字或短语" aria-label="搜索">
        <button aria-label="查找"><Icon name="binoc" /></button>
        <button class="login"><Icon name="user" /><span>登录</span><Icon name="down" /></button>
        <button class="cart" aria-label="商店"><Icon name="cart" /></button>
        <button class="pair" aria-label="A360"><Icon name="a360" /><Icon name="down" /></button>
        <button class="pair help" aria-label="帮助"><Icon name="help" /><Icon name="down" /></button>
      </div>
      <div class="win">
        <button aria-label="最小化"><Icon name="wMin" /></button>
        <button aria-label="还原"><Icon name="wMax" /></button>
        <button aria-label="关闭"><Icon name="wClose" /></button>
      </div>
    </header>

    <nav class="menubar">
      <button v-for="m in menus" :key="m">{{ m }}</button>
      <div class="doc-win">
        <button aria-label="最小化图形"><Icon name="dMin" /></button>
        <button aria-label="还原图形"><Icon name="dMax" /></button>
        <button aria-label="关闭图形"><Icon name="dClose" /></button>
      </div>
    </nav>

    <nav class="tabs">
      <button v-for="t in tabs" :key="t" :class="{ active: t === activeTab }" @click="activeTab = t">{{ t }}</button>
      <button class="collapse" aria-label="最小化功能区"><Icon name="ribbonMin" /><Icon name="down" /></button>
    </nav>

    <section class="ribbon">
      <div class="panel p-draw">
        <div class="body">
          <button class="big"><Icon name="line" /><span>直线</span></button>
          <button class="big"><Icon name="pline" /><span>多段线</span></button>
          <button class="big"><Icon name="circle" /><span>圆</span><Icon name="down" /></button>
          <button class="big wide"><Icon name="arc" /><span>圆弧</span><Icon name="down" /></button>
          <div class="rows">
            <button v-for="n in ['rect', 'ellipse', 'hatch']" :key="n" class="sm" :aria-label="n"><Icon :name="n" /><Icon name="down" class="arr" /></button>
          </div>
        </div>
        <button class="ptitle">绘图<Icon name="downL" /></button>
      </div>

      <div class="panel p-modify">
        <div class="body modgrid">
          <button v-for="m in modify" :key="m[0]" class="sm" :aria-label="m[1] || m[0]">
            <Icon :name="m[0]" /><span v-if="m[1]">{{ m[1] }}</span><Icon v-if="m[2]" name="down" class="arr" />
          </button>
        </div>
        <button class="ptitle">修改<Icon name="downL" /></button>
      </div>

      <div class="panel p-anno">
        <div class="body">
          <button class="big wide"><Icon name="text" /><span>文字</span><Icon name="down" /></button>
          <button class="big"><Icon name="dim" /><span>标注</span></button>
          <div class="rows">
            <button class="sm"><Icon name="linear" /><span>线性</span><Icon name="down" class="arr" /></button>
            <button class="sm"><Icon name="leader" /><span>引线</span><Icon name="down" class="arr" /></button>
            <button class="sm"><Icon name="table" /><span>表格</span></button>
          </div>
        </div>
        <button class="ptitle">注释<Icon name="downL" /></button>
      </div>

      <div class="panel p-layer">
        <div class="body">
          <button class="big two"><Icon name="layers" /><span>图层<br>特性</span></button>
          <div class="rows grow">
            <div class="combo">
              <Icon name="bulb" /><Icon name="sun" /><Icon name="lock" /><i class="swatch"></i>
              <select v-model="layer" aria-label="图层"><option>0</option></select>
              <Icon name="downL" />
            </div>
            <div v-for="(row, i) in layerTools" :key="i" class="tools">
              <button v-for="n in row" :key="n" :aria-label="n"><Icon :name="n" /></button>
              <span>{{ i ? '匹配图层' : '置为当前' }}</span>
            </div>
          </div>
        </div>
        <button class="ptitle">图层<Icon name="downL" /></button>
      </div>

      <div class="panel p-block">
        <div class="body">
          <button class="big"><Icon name="insert" /><span>插入</span><Icon name="down" /></button>
          <div class="rows">
            <button class="sm"><Icon name="create" /><span>创建</span></button>
            <button class="sm"><Icon name="edit" /><span>编辑</span></button>
            <button class="sm"><Icon name="editAttr" /><span>编辑属性</span><Icon name="down" class="arr" /></button>
          </div>
        </div>
        <button class="ptitle">块<Icon name="downL" /></button>
      </div>

      <div class="panel p-props">
        <div class="body">
          <button class="big two"><Icon name="match" /><span>特性<br>匹配</span></button>
          <div class="rows grow">
            <div class="prop"><Icon name="wheel" />
              <div class="combo"><i class="swatch framed"></i><select aria-label="颜色"><option>ByLayer</option></select><Icon name="downL" /></div>
            </div>
            <div class="prop"><Icon name="weight" />
              <div class="combo"><i class="stroke"></i><select aria-label="线宽"><option>ByLayer</option></select><Icon name="downL" /></div>
            </div>
            <div class="prop"><Icon name="ltype" />
              <div class="combo"><i class="stroke long"></i><select aria-label="线型"><option>ByLayer</option></select><Icon name="downL" /></div>
            </div>
          </div>
        </div>
        <button class="ptitle">特性<Icon name="downL" /><Icon name="expand" class="corner" /></button>
      </div>

      <div class="panel p-group">
        <div class="body">
          <button class="big"><Icon name="group" /><span>组</span></button>
          <div class="rows">
            <button v-for="n in ['ungroup', 'groupEdit', 'groupSel']" :key="n" class="sm" :aria-label="n"><Icon :name="n" /></button>
          </div>
        </div>
        <button class="ptitle">组<Icon name="downL" /></button>
      </div>

      <div class="panel p-util">
        <div class="body">
          <button class="big"><Icon name="measure" /><span>测量</span><Icon name="down" /></button>
          <div class="rows">
            <button v-for="n in ['quick', 'point', 'calc']" :key="n" class="sm" :aria-label="n"><Icon :name="n" /></button>
          </div>
        </div>
        <button class="ptitle">实用工具<Icon name="downL" /></button>
      </div>

      <div class="panel p-clip">
        <div class="body">
          <button class="big"><Icon name="paste" /><span>粘贴</span><Icon name="down" /></button>
          <div class="rows">
            <button v-for="n in ['cut', 'copyClip']" :key="n" class="sm" :aria-label="n"><Icon :name="n" /></button>
          </div>
        </div>
        <button class="ptitle">剪贴板</button>
      </div>

      <div class="panel p-view">
        <div class="body">
          <button class="big"><Icon name="base" /><span>基点</span><Icon name="down" /></button>
        </div>
        <button class="ptitle">视图<Icon name="downL" /><Icon name="expand" /></button>
      </div>
    </section>

    <nav class="files">
      <button class="file">
        <svg class="shape" width="134" height="23" viewBox="0 0 134 23"><path d="M0 23C8 20 5 1 14 1H120C129 1 126 20 134 23Z" fill="#4d4d4d" /></svg>
        <span>开始</span>
      </button>
      <button class="file current">
        <svg class="shape" width="134" height="23" viewBox="0 0 134 23"><path d="M0 23C8 20 5 1 14 1H116C125 1 122 20 134 23Z" fill="#686868" stroke="#7c7c7c" stroke-width="1" /></svg>
        <span>Drawing2*</span><b>✕</b>
      </button>
      <button class="add" aria-label="新图形">+</button>
    </nav>

    <main class="canvas">
      <p class="vp">[−][俯视][二维线框]</p>
      <svg class="drawing" width="100%" height="100%">
        <g fill="none" stroke="#111" stroke-width="1.200">
          <circle cx="606" cy="406.500" r="91" />
          <line v-for="(s, i) in sunRays" :key="'s' + i" v-bind="s" />
          <path d="M895.800 514.100A160 160 0 1 1 1187.600 524.300" />
          <line v-for="(s, i) in arcRays" :key="'a' + i" v-bind="s" />
          <path d="M235.500 581V631.500H286M230.500 626.500h10v10h-10z" />
        </g>
        <text class="axis" x="237" y="577">Y</text>
        <text class="axis" x="290" y="630">X</text>
        <path d="M1514.500 337V432" stroke="#c4c4c4" stroke-width="5" />
        <path d="M1513.500 337V433" stroke="#000" stroke-width="2" />
        <path d="M1469 432.500h97M1517.500 384v97" stroke="#111" />
        <rect x="1514.500" y="429.500" width="6" height="6" fill="#fff" stroke="#000" />
      </svg>

      <div class="cube">
        <span class="n">北</span><span class="w">西</span>
        <button class="face" aria-label="上">
          <svg width="32" height="32" viewBox="0 0 32 32"><rect width="32" height="32" fill="#dde0e6" /><path d="M0 25.500h32" stroke="#c3c7cf" /><path d="M14.500 5v20" stroke="#888" stroke-width="2" /><path d="M23 12.500h5M26 24.500h4" stroke="#888" stroke-width="1.500" /></svg>
        </button>
        <span class="e">东</span><span class="s">南</span>
      </div>
      <button class="wcs">WCS
        <svg width="9" height="6" viewBox="0 0 9 6"><path d="M.5 .5h8L4.500 5z" fill="none" stroke="#aaaab8" /></svg>
      </button>
      <div class="navbar">
        <svg width="36" height="216" viewBox="0 0 36 216" fill="none" stroke="#cfcfcf">
          <circle cx="28" cy="7" r="3.500" /><path d="M26 5l4 4M30 5l-4 4" />
          <path d="M8 32q0-11 11-11h7q3 0 3 3v8q0 11-10 11t-11-11z" /><circle cx="18" cy="32" r="5.500" /><path d="M14 36l-3 3M22 36l3 3" />
          <path d="M15 52h6l-3 3z" fill="#ccc" /><path d="M6 58.500h24" />
          <path d="M12 84q-2-5-5-8q1-3 5 1l-1-9q2-3 4 0l1 5V65q2-2 3 0v8l2-7q2-2 3 1l-1 8l3-4q3 0 1 4l-3 8v3q-7 4-12-2z" />
          <path d="M7 93l14 14M21 93L7 107M7 97v-5h5M16 92h5v5M7 103v5h5" /><circle cx="22" cy="106" r="5" /><path d="M26 110l4 4" stroke-width="2.500" />
          <path d="M15 121h6l-3 3z" fill="#ccc" />
          <path d="M16 150v-16h-3l5-5 5 5h-3v16zM15 141q-8 1-8 4t14 3t7-6q-2-1-6-1M13 142l-4 4 4 3" />
          <path d="M15 159h6l-3 3z" fill="#ccc" /><path d="M6 166.500h24" />
          <path d="M6.500 171.500h6v6h-6zM14.500 171.500h6v6h-6zM22.500 171.500h6v6h-6zM6.500 180.500h16v13h-16z" /><path d="M11 183l8 4-8 4z" fill="#ccc" />
          <circle cx="28" cy="208" r="3.500" /><path d="M26 207h4M26 209h4" />
        </svg>
      </div>

      <div class="cmd">
        <ul class="history">
          <li v-for="(line, i) in history" :key="i"><span><span v-for="(p, j) in line" :key="j" :class="{ mono: p[1] }">{{ p[0] }}</span></span></li>
        </ul>
        <div class="cmdline">
          <div class="grip"><Icon name="grip" /><b>✕</b><Icon name="wrench" /></div>
          <Icon name="prompt" /><Icon name="downG" />
          <input v-model="command" type="text" placeholder="键入命令" aria-label="命令">
          <Icon name="upG" />
        </div>
      </div>
    </main>

    <footer class="status">
      <div class="layouts">
        <button class="on">模型</button><button>布局1</button><button>布局2</button><button class="plus">+</button>
      </div>
      <div class="modes">
        <div class="grp"><button class="model">模型</button></div>
        <div v-for="(g, i) in statusGroups" :key="i" class="grp" :class="'g' + i">
          <template v-for="(n, j) in g" :key="j">
            <Icon v-if="n === 'v'" name="downL" />
            <button v-else :aria-label="n"><Icon :name="n" /></button>
          </template>
        </div>
      </div>
    </footer>

    <footer class="taskbar">
      <button v-for="n in ['win', 'cortana', 'taskview']" :key="n" class="sys" :aria-label="n"><Icon :name="n" /></button>
      <button v-for="n in apps" :key="n" class="app" :class="{ active: n === 'acad' }" :aria-label="n"><Icon :name="n" /></button>
      <div class="tray">
        <button v-for="n in ['up', 'trayMic', 'net', 'qq', 'speaker']" :key="n" :aria-label="n"><Icon :name="n" /></button>
        <button class="lang">英</button>
        <button class="sg" aria-label="搜狗"><Icon name="sogou" /></button>
        <div class="clock"><span>18:32</span><span>2021/8/5</span></div>
        <button class="note" aria-label="通知"><Icon name="note" /></button>
      </div>
    </footer>

    <div class="ime">
      <Icon name="sogou" />
      <div class="ime-bar"><button class="zh">中</button><button v-for="n in ime" :key="n" :aria-label="n"><Icon :name="n" /></button></div>
    </div>

    <div v-if="toastOpen" class="toast">
      <span>暂无人说话</span>
      <button aria-label="关闭" @click="toastOpen = false"><svg width="12" height="12" viewBox="0 0 12 12"><path d="M1 1l10 10M11 1L1 11" stroke="#fff" stroke-width="2" /></svg></button>
    </div>
    <div class="ball">03:08</div>
  </div>
</template>

<style>
body{margin:0;background:#383838;}
</style>

<style scoped>
.cad{position:relative;display:flex;flex-direction:column;min-height:100vh;font:12px/16px 'Open Sans','Noto Sans CJK SC',sans-serif;color:#f0f0f0;overflow:hidden;}
button{font:inherit;color:inherit;background:none;border:0;padding:0;margin:0;white-space:nowrap;}
input,select{font:inherit;color:inherit;background:none;border:0;padding:0;margin:0;outline:0;appearance:none;}
.ico{display:block;flex:none;overflow:visible;}

.titlebar{display:flex;height:24px;background:#fff;color:#111;border-bottom:1px solid #333;}
.app-btn{position:absolute;left:0;top:0;width:41px;height:41px;border:1px solid #111;background:linear-gradient(#b5b5b5,#6c6c6c);display:flex;align-items:center;padding-left:2px;z-index:2;}
.app-btn .ico + .ico{margin-left:-3px;}
.qat{display:flex;align-items:center;gap:8px;width:204px;margin-left:41px;padding-left:9px;background:linear-gradient(#ababab,#858585);}
.qat .dim{opacity:.5;margin:0 -2px;}
.title{flex:1;margin:0;font-size:12px;font-weight:400;line-height:24px;display:flex;justify-content:center;gap:18px;}
.info{display:flex;align-items:center;width:446px;background:linear-gradient(#a3a3a3,#7d7d7d);color:#fff;}
.handle{width:14px;padding-left:4px;box-sizing:border-box;}
.search{width:180px;height:22px;margin-right:4px;padding-left:3px;box-sizing:border-box;background:#7a7a7a;border:1px solid #4a4a4a;font-style:italic;}
.search::placeholder{color:#dadada;}
.login{display:flex;align-items:center;width:124px;padding-left:8px;gap:5px;box-sizing:border-box;}
.login .ico:last-child{margin-left:auto;margin-right:5px;}
.cart{margin-left:6px;}
.pair{display:flex;align-items:center;gap:5px;margin-left:8px;}
.help{gap:6px;padding-left:10px;border-left:1px solid #8f8f8f;}
.win{display:flex;align-items:center;gap:35px;padding:0 20px 2px 42px;}

.menubar{display:flex;align-items:center;gap:25px;height:20px;padding-left:55px;background:linear-gradient(#a2a2a2,#5c5c5c);border-bottom:1px solid #383838;}
.doc-win{display:flex;align-items:center;gap:6px;margin-left:auto;padding-right:5px;}

.tabs{display:flex;align-items:stretch;height:20px;padding-left:4px;background:#535353;color:#c6c6c6;}
.tabs button{padding:2px 10px 0;}
.tabs .active{padding:1px 9px 0;background:linear-gradient(#7b7b7b,#5e5e5e);color:#fff;border:1px solid #393939;border-bottom:0;}
.tabs .collapse{display:flex;align-items:center;gap:5px;padding-left:22px;}

.ribbon{display:flex;height:98px;background:linear-gradient(#565656,#393939);border-top:1px solid #383838;box-sizing:border-box;}
.panel{display:flex;flex-direction:column;flex:none;box-sizing:border-box;background:#5d5d5d;border-right:1px solid #3f3f3f;border-left:1px solid #6a6a6a;}
.body{display:flex;height:78px;padding-top:4px;box-sizing:border-box;}
.ptitle{display:flex;align-items:center;justify-content:center;gap:6px;flex:1;background:linear-gradient(#4a4a4a,#525252);position:relative;}
.corner{position:absolute;right:5px;bottom:6px;}
.p-draw{width:212px;padding-left:2px;}
.p-modify{width:226px;}
.p-anno{width:156px;padding-left:2px;}
.p-layer{width:253px;}
.p-block{width:134px;}
.p-props{width:244px;}
.p-group{width:68px;}
.p-util{width:76px;}
.p-clip{width:75px;}
.p-view{width:61px;}
.p-draw .ptitle,.p-anno .ptitle{margin-left:-2px;}

.big{display:flex;flex-direction:column;align-items:center;width:40px;height:74px;padding-top:1px;box-sizing:border-box;}
.big.wide{width:45px;}
.big span{margin-top:4px;}
.big span + .ico{margin-top:3px;}
.two span{line-height:17px;}
.p-layer .big{width:41px;}
.p-util .big{width:48px;}
.p-clip .big{width:50px;}
.p-view .big{width:59px;}
.rows{display:flex;flex-direction:column;}
.grow{flex:1;}
.sm{display:flex;align-items:center;gap:5px;height:24px;}
.arr{margin-left:2px;}
.p-draw .rows{padding-left:4px;}
.p-group .rows{padding-left:4px;}
.p-clip .rows{padding-left:2px;}
.p-anno .rows{padding-left:3px;}
.p-block .rows{padding-left:3px;}
.modgrid{display:grid;grid-template-columns:59px 59px 75px 24px;grid-auto-rows:24px;padding-left:6px;}
.modgrid .arr{margin-left:4px;}
.combo{display:flex;align-items:center;height:22px;padding-right:1px;box-sizing:border-box;background:linear-gradient(#505050,#686868);border:1px solid #333;}
.combo select{flex:1;min-width:0;height:20px;color:#fff;}
.combo option{background:#555;}
.p-layer .combo{gap:4px;margin:1px 3px 1px 0;padding-left:5px;}
.p-layer .combo select{margin-left:1px;}
.swatch{width:14px;height:14px;background:#000;}
.framed{border:1px solid #aaa;margin:0 10px 0 12px;}
.stroke{width:59px;height:1px;background:#eee;margin:0 1px 0 8px;}
.stroke.long{width:64px;margin-left:3px;}
.tools{display:flex;align-items:center;height:24px;gap:8px;padding-left:4px;}
.tools span{margin-left:-4px;}
.prop{display:flex;align-items:center;gap:2px;height:24px;padding-left:1px;}
.prop .combo{flex:1;margin-right:2px;}

.files{display:flex;align-items:flex-end;height:30px;padding-left:12px;box-sizing:border-box;background:#383838;border-top:1px solid #8a8a8a;border-bottom:3px solid #5c5c5c;color:#b0b0b0;}
.file{position:relative;display:flex;align-items:center;width:134px;height:22px;padding-left:20px;}
.file .shape{position:absolute;left:0;bottom:0;}
.file span,.file b{position:relative;}
.file b{margin-left:auto;margin-right:18px;font-size:11px;font-weight:400;color:#2e2e2e;}
.file.current{margin-left:-6px;padding-left:15px;color:#fff;}
.add{width:22px;height:18px;margin:0 0 3px 2px;border-radius:4px 10px 2px 10px;background:#555;color:#ccc;font-size:16px;font-weight:700;line-height:16px;}

.canvas{position:relative;flex:1;min-height:600px;background:#fff;border-right:7px solid #b5cfe9;box-shadow:inset -1px 0 #eee;}
.vp{margin:0;padding:6px 3px;color:#222;}
.drawing{position:absolute;left:0;top:0;}
.axis{font:300 20px Roboto,sans-serif;fill:#111;}
.cube{position:absolute;right:16px;top:15px;width:137px;height:137px;display:grid;grid-template-columns:24px 1fr 24px;grid-template-rows:24px 1fr 24px;place-items:center;font-size:19px;font-weight:700;color:#fff;-webkit-text-stroke:1px #b0b0b0;}
.cube::before{content:'';position:absolute;inset:9px;border:10px solid #fafafa;border-radius:50%;}
.cube span{position:relative;line-height:24px;}
.cube .n{grid-area:1/2;}
.cube .w{grid-area:2/1;}
.cube .face{grid-area:2/2;}
.cube .e{grid-area:2/3;}
.cube .s{grid-area:3/2;}
.face{position:relative;width:52px;height:52px;display:flex;align-items:center;justify-content:center;background:#ececec;border:1px solid #999;}
.wcs{position:absolute;right:60px;top:169px;height:17px;padding:0 4px;display:flex;align-items:center;gap:5px;border-radius:4px;background:#eae8f3;color:#8d8d99;font:11px 'Liberation Sans',sans-serif;}
.navbar{position:absolute;right:3px;top:210px;width:36px;height:216px;box-sizing:border-box;background:#f4f4f4;border-radius:6px;box-shadow:inset 0 0 0 2px #c4c4c4;}

.cmd{position:absolute;left:20vw;width:60vw;bottom:0;}
.history{list-style:none;margin:0 0 1px 61px;padding:0;font-size:13px;color:#fff;}
.history li{height:20px;display:flex;align-items:center;}
.history li > span{padding:0 2px;line-height:15px;height:15px;background:#cfcfcf;border-radius:2px;white-space:pre;}
.mono{font-family:'DejaVu Sans Mono',monospace;font-size:12px;}
.cmdline{display:flex;align-items:center;gap:5px;height:27px;padding-right:4px;box-sizing:border-box;background:#fff;border:1px solid #888;border-radius:2px;}
.cmdline input{flex:1;padding-left:2px;font-size:13px;font-style:italic;color:#333;}
.cmdline input::placeholder{color:#aaa;}
.grip{display:flex;align-items:center;gap:8px;width:53px;height:25px;padding-left:3px;box-sizing:border-box;background:linear-gradient(#9b9b9b,#7a7a7a);}
.grip b{width:10px;font-size:12px;}

.status{display:flex;justify-content:space-between;height:29px;background:#383838;}
.layouts{display:flex;align-items:flex-start;gap:5px;padding-left:12px;color:#bbb;}
.layouts button{width:48px;height:18px;background:#555;clip-path:polygon(0 0,100% 0,88% 94%,82% 100%,18% 100%,12% 94%);}
.layouts .on{width:46px;background:#808080;color:#fff;font-weight:700;}
.layouts .plus{width:24px;font-size:16px;font-weight:700;line-height:16px;}
.modes{display:flex;width:637px;height:27px;background:#515151;}
.grp{display:flex;align-items:center;gap:8px;padding:0 5px;box-sizing:border-box;border:1px solid #777;}
.grp + .grp{border-left:0;}
.model{width:24px;color:#fff;font-weight:700;}
.grp:first-child{padding:0 2px;}
.g0{width:67px;}
.g1{width:103px;gap:7px;padding:0 8px;}
.g2{width:65px;padding:0 4px;}
.g3{width:24px;padding:0 4px;}
.g4{width:41px;}
.g5{width:27px;}
.g6{flex:1;gap:6px;}

.taskbar{display:flex;height:40px;background:linear-gradient(90deg,#323633,#464443 30%,#3f3f3e 60%,#333734);}
.sys{width:48px;display:grid;place-items:center;}
.taskbar .sys:nth-child(3){margin-right:2px;}
.app{width:49px;display:grid;place-items:center;background:linear-gradient(#76b0dc,#76b0dc) center bottom/40px 2px no-repeat;}
.app.active{background:#6c6a69 linear-gradient(#8ec4ee,#8ec4ee) center bottom/49px 2px no-repeat;}
.tray{display:flex;align-items:center;margin-left:auto;}
.tray > button{width:24px;display:grid;place-items:center;}
.tray .lang{font-size:14px;}
.tray .sg{width:30px;}
.sg .ico{width:17px;height:18px;}
.clock{width:80px;display:flex;flex-direction:column;align-items:center;line-height:19px;}
.tray .note{width:42px;margin-right:12px;}

.ime{position:absolute;right:0;bottom:37px;display:flex;align-items:center;width:208px;height:29px;background:#000;}
.ime > .ico{position:relative;z-index:1;margin-left:2px;}
.ime-bar{display:flex;align-items:center;justify-content:space-between;flex:1;height:23px;margin-left:-8px;padding:0 3px 0 13px;background:#fff;}
.zh{color:#2672c0;font-size:15px;font-weight:700;}

.toast{position:absolute;right:67px;top:46px;width:256px;height:34px;padding:0 10px 0 12px;box-sizing:border-box;display:flex;align-items:center;justify-content:space-between;background:#000;color:#fff;border-radius:2px;}
.ball{position:absolute;right:116px;top:76px;width:46px;height:46px;border:2px solid #e8eef5;border-radius:50%;background:radial-gradient(circle at 50% 120%,#7fd0ee 30%,#5aaef0 60%,#3f86ec 62%);text-align:center;font-size:14px;line-height:46px;color:#eaf6ff;}
</style>
